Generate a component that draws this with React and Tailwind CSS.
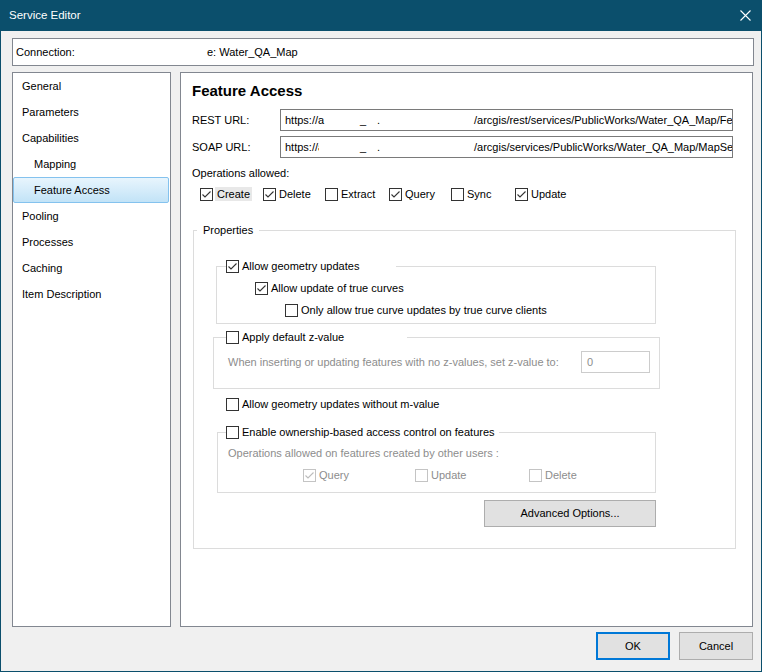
import React from 'react';

const Box = ({ checked, disabled }) => (
    <span
        className={`block w-[13px] h-[13px] shrink-0 border bg-white ${disabled ? 'border-[#c4c4c4]' : 'border-[#333333]'}`}
    >
        {checked && (
            <svg width="11" height="11" viewBox="0 0 11 11" className="block">
                <polyline
                    points="1.5,5.5 4,8 9.5,2.5"
                    fill="none"
                    stroke={disabled ? '#bcbcbc' : '#333333'}
                    strokeWidth="1.1"
                />
            </svg>
        )}
    </span>
);

const Check = ({ label, checked, disabled, className = '', highlight }) => (
    <div className={`flex items-center h-[16px] ${className}`}>
        <Box checked={checked} disabled={disabled} />
        <span
            className={`${highlight ? 'ml-[2px] px-[2px] bg-[#e8e8e8]' : 'ml-[3px]'} leading-[14px] whitespace-nowrap ${disabled ? 'text-[#8d8d8d]' : 'text-black'}`}
        >
            {label}
        </span>
    </div>
);

const UrlBox = ({ lead, clip, rest }) => (
    <div className="w-[453px] h-[22px] border border-[#7a7a7a] bg-white flex items-center pl-[4px] overflow-hidden whitespace-nowrap">
        <span className="inline-block w-[75px] shrink-0">
            <span className="inline-block overflow-hidden align-bottom" style={{ width: clip }}>
                {lead}
            </span>
        </span>
        <span className="inline-block w-[17px] shrink-0">_</span>
        <span className="inline-block w-[97px] shrink-0">.</span>
        <span className="shrink-0">{rest}</span>
    </div>
);

const navItems = [
    { label: 'General' },
    { label: 'Parameters' },
    { label: 'Capabilities' },
    { label: 'Mapping', indent: true },
    { label: 'Feature Access', indent: true, active: true },
    { label: 'Pooling' },
    { label: 'Processes' },
    { label: 'Caching' },
    { label: 'Item Description' },
];

export default function App() {
    return (
        <div className="w-[762px] h-[672px] bg-[#0b4f6c] px-px pb-px flex flex-col font-['Liberation_Sans',Arial,sans-serif] text-[11px] text-black">
            {/* Title bar */}
            <div className="h-[31px] flex items-center justify-between pl-[8px] pr-[10px] shrink-0">
                <span className="text-white text-[11.5px]">Service Editor</span>
                <svg width="11" height="11" viewBox="0 0 11 11">
                    <path d="M0.5 0.5 L10.5 10.5 M10.5 0.5 L0.5 10.5" stroke="#ffffff" strokeWidth="1.1" />
                </svg>
            </div>

            <div className="flex-1 bg-[#f0f0f0] pl-[11px] pt-[7px]">
                {/* Connection */}
                <div className="w-[742px] h-[28px] border border-[#828790] bg-white flex items-center pl-[3px] whitespace-nowrap">
                    <span className="inline-block w-[191px]">Connection:</span>
                    <span>e: Water_QA_Map</span>
                </div>

                <div className="flex gap-[9px] mt-[6px]">
                    {/* Navigation */}
                    <div className="w-[159px] h-[555px] border border-[#828790] bg-white">
                        {navItems.map((item) => (
                            <div
                                key={item.label}
                                className={`h-[26px] flex items-center ${item.active
                                    ? 'mr-px rounded-[2px] border border-[#84c2ee] bg-gradient-to-b from-[#e8f5fd] to-[#c2e3f7]'
                                    : ''
                                    } ${item.indent ? (item.active ? 'pl-[20px]' : 'pl-[21px]') : 'pl-[9px]'}`}
                            >
                                {item.label}
                            </div>
                        ))}
                    </div>

                    {/* Feature Access panel */}
                    <div className="w-[573px] h-[555px] border border-[#828790] bg-white pl-[11px] pt-[9px]">
                        <h1 className="text-[15px] font-bold leading-[18px]">Feature Access</h1>

                        <div className="flex items-center mt-[9px]">
                            <span className="w-[88px]">REST URL:</span>
                            <UrlBox lead="https://a" clip="41px" rest="/arcgis/rest/services/PublicWorks/Water_QA_Map/FeatureServer" />
                        </div>
                        <div className="flex items-center mt-[5px]">
                            <span className="w-[88px]">SOAP URL:</span>
                            <UrlBox lead="https://a" clip="34px" rest="/arcgis/services/PublicWorks/Water_QA_Map/MapServer/FeatureServer" />
                        </div>

                        <div className="mt-[7px] h-[16px] leading-[16px]">Operations allowed:</div>
                        <div className="flex items-center h-[18px] mt-[4px] ml-[8px]">
                            <Check className="w-[63px]" label="Create" checked highlight />
                            <Check className="w-[62px]" label="Delete" checked />
                            <Check className="w-[64px]" label="Extract" />
                            <Check className="w-[62px]" label="Query" checked />
                            <Check className="w-[64px]" label="Sync" />
                            <Check label="Update" checked />
                        </div>

                        {/* Properties */}
                        <fieldset className="mt-[19px] ml-px w-[543px] border border-[#dcdcdc] pb-[21px]">
                            <legend className="ml-[3px] px-[6px] h-[16px] leading-[16px]">Properties</legend>

                            <fieldset className="mt-[20px] ml-[22px] w-[440px] border border-[#dcdcdc] pb-[5px]">
                                <legend className="ml-[9px] w-[170px] h-[16px]">
                                    <Check label="Allow geometry updates" checked />
                                </legend>
                                <Check className="mt-[6px] pl-[38px]" label="Allow update of true curves" checked />
                                <Check className="mt-[6px] pl-[68px]" label="Only allow true curve updates by true curve clients" />
                            </fieldset>

                            <fieldset className="mt-[5px] ml-[19px] w-[447px] border border-[#dcdcdc] pb-[15px]">
                                <legend className="ml-[12px] w-[181px] h-[16px]">
                                    <Check label="Apply default z-value" />
                                </legend>
                                <div className="mt-[6px] h-[22px] flex items-center pl-[14px] pr-[9px]">
                                    <span className="text-[#8d8d8d]">
                                        When inserting or updating features with no z-values, set z-value to:
                                    </span>
                                    <div className="ml-auto w-[69px] h-[22px] border border-[#cccccc] bg-white pl-[5px] flex items-center text-[#8d8d8d]">
                                        0
                                    </div>
                                </div>
                            </fieldset>

                            <Check className="mt-[7px] ml-[32px]" label="Allow geometry updates without m-value" />

                            <fieldset className="mt-[12px] ml-[23px] w-[439px] border border-[#dcdcdc] pb-[9px]">
                                <legend className="ml-[8px] w-[273px] h-[16px]">
                                    <Check label="Enable ownership-based access control on features" />
                                </legend>
                                <div className="mt-[5px] pl-[10px] h-[16px] leading-[16px] text-[#8d8d8d]">
                                    Operations allowed on features created by other users :
                                </div>
                                <div className="mt-[6px] pl-[85px] h-[16px] flex items-center">
                                    <Check className="w-[112px]" label="Query" checked disabled />
                                    <Check className="w-[114px]" label="Update" disabled />
                                    <Check label="Delete" disabled />
                                </div>
                            </fieldset>

                            <button className="mt-[7px] ml-[290px] w-[172px] h-[27px] border border-[#adadad] bg-[#e1e1e1] flex items-center justify-center">
                                Advanced Options...
                            </button>
                        </fieldset>
                    </div>
                </div>

                {/* Footer buttons */}
                <div className="flex justify-end gap-[9px] mt-[5px] w-[741px]">
                    <button className="w-[74px] h-[28px] border-2 border-[#0078d7] bg-[#e1e1e1]">OK</button>
                    <button className="w-[74px] h-[28px] border border-[#adadad] bg-[#e1e1e1]">Cancel</button>
                </div>
            </div>
        </div>
    );
}
